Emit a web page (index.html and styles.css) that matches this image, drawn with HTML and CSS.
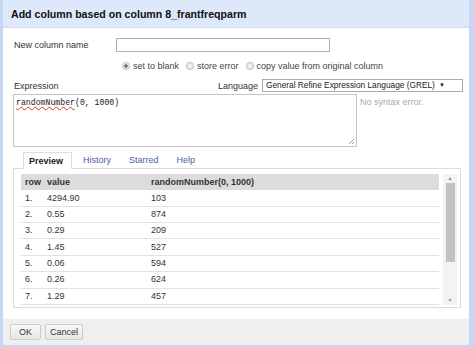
FILE: index.html
```html
<!DOCTYPE html>
<html lang="en">
<head>
    <meta charset="UTF-8">
    <title>Add column</title>
    <link rel="stylesheet" href="styles.css">
</head>
<body>
    <div class="dialog">
        <div class="dialog-header">Add column based on column 8_frantfreqparm</div>
        <div class="dialog-body">
            <div class="name-row">
                <span class="name-label">New column name</span>
                <input type="text" class="name-input">
            </div>
            <div class="radio-row">
                <label><span class="radio checked"></span>set to blank</label>
                <label><span class="radio"></span>store error</label>
                <label><span class="radio"></span>copy value from original column</label>
            </div>
            <div class="expr-row">
                <span>Expression</span>
                <span class="lang">Language
                    <span class="lang-select">General Refine Expression Language (GREL)<span class="caret">&#9660;</span></span>
                </span>
            </div>
            <div class="code-row">
                <div class="code-box"><span class="squiggle">randomNumber</span>(0, 1000)<span class="grip"></span></div>
                <div class="status">No syntax error.</div>
            </div>
            <div class="tabs">
                <span class="tab active">Preview</span>
                <span class="tab">History</span>
                <span class="tab">Starred</span>
                <span class="tab">Help</span>
            </div>
            <div class="panel">
                <div class="grid-wrap">
                    <table class="preview">
                        <tr class="head"><td class="c1">row</td><td class="c2">value</td><td>randomNumber(0, 1000)</td></tr>
                        <tr><td class="c1">1.</td><td class="c2">4294.90</td><td>103</td></tr>
                        <tr><td class="c1">2.</td><td class="c2">0.55</td><td>874</td></tr>
                        <tr><td class="c1">3.</td><td class="c2">0.29</td><td>209</td></tr>
                        <tr><td class="c1">4.</td><td class="c2">1.45</td><td>527</td></tr>
                        <tr><td class="c1">5.</td><td class="c2">0.06</td><td>594</td></tr>
                        <tr><td class="c1">6.</td><td class="c2">0.26</td><td>624</td></tr>
                        <tr><td class="c1">7.</td><td class="c2">1.29</td><td>457</td></tr>
                    </table>
                    <div class="scrollbar">
                        <span class="arrow">&#9650;</span>
                        <span class="track"><span class="thumb"></span></span>
                        <span class="arrow">&#9660;</span>
                    </div>
                </div>
            </div>
        </div>
        <div class="dialog-footer">
            <button class="btn">OK</button>
            <button class="btn">Cancel</button>
        </div>
    </div>
</body>
</html>
```

FILE: styles.css
```css
body {
    margin: 0;
    font-family: 'Liberation Sans', Arial, sans-serif;
    font-size: 9px;
    color: #333;
}
.dialog {
    width: 474px;
    height: 347px;
    box-sizing: border-box;
    display: flex;
    flex-direction: column;
    background-color: white;
    border-left: 3px solid #c6d6f5;
    border-right: 5px solid #c6d6f5;
    border-bottom: 2px solid #c6d6f5;
}
.dialog-header {
    height: 27px;
    line-height: 29px;
    padding-left: 8px;
    background-color: #dde8fa;
    font-size: 10.6px;
    font-weight: bold;
    color: #111;
    border-bottom: 1px solid #d0ddf5;
}
.dialog-body {
    flex: 1;
    padding: 10px 6px 0 10px;
}
.name-row {
    display: flex;
    align-items: center;
    height: 14px;
}
.name-label {
    width: 102px;
    padding-left: 1px;
}
.name-input {
    width: 210px;
    height: 10px;
    padding: 1px;
    border: 1px solid #b0b0b0;
    margin: 0;
}
.radio-row {
    display: flex;
    margin: 8px 0 0 109px;
    height: 12px;
    align-items: center;
    color: #444;
}
.radio-row label {
    display: flex;
    align-items: center;
    margin-right: 7px;
}
.radio {
    width: 8px;
    height: 8px;
    border-radius: 50%;
    border: 1px solid #bbb;
    background-color: #eee;
    margin-right: 3px;
    box-sizing: border-box;
    display: inline-block;
}
.radio.checked {
    background: radial-gradient(circle, #777 0 1.5px, #eee 2px);
}
.expr-row {
    display: flex;
    justify-content: space-between;
    align-items: center;
    margin-top: 7px;
    height: 13px;
    padding-left: 1px;
}
.lang {
    display: flex;
    align-items: center;
    gap: 4px;
}
.lang-select {
    width: 193px;
    height: 11px;
    line-height: 11px;
    padding: 0 3px;
    border: 1px solid #aaa;
    position: relative;
    color: #222;
    font-size: 8.3px;
    white-space: nowrap;
}
.caret {
    position: absolute;
    right: 17px;
    top: 0;
    font-size: 6px;
}
.code-row {
    display: flex;
    margin-top: 2px;
}
.code-box {
    width: 338px;
    height: 45px;
    border: 1px solid #c4c4c4;
    padding: 3px 2px;
    font-family: 'Liberation Mono', monospace;
    font-size: 8.2px;
    color: #222;
    position: relative;
}
.squiggle {
    text-decoration: underline wavy #d33;
    text-decoration-thickness: 1px;
}
.grip {
    position: absolute;
    right: 2px;
    bottom: 2px;
    width: 5px;
    height: 5px;
    background: linear-gradient(135deg, transparent 50%, #999 50%, #999 60%, transparent 60%, transparent 75%, #999 75%, #999 85%, transparent 85%);
}
.status {
    margin: 3px 0 0 3px;
    color: #aaa;
}
.tabs {
    display: flex;
    margin-top: 5px;
    padding-left: 10px;
    height: 17px;
}
.tab {
    padding: 0 13px 0 5px;
    line-height: 17px;
    color: #4a63a6;
}
.tab.active {
    padding: 0 8px 0 5px;
    margin-right: 6px;
    color: #222;
    font-weight: bold;
    border: 1px solid #ddd;
    border-bottom: none;
    background-color: white;
    position: relative;
    z-index: 1;
}
.panel {
    width: 448px;
    height: 140px;
    border: 1px solid #ddd;
    margin-top: -1px;
    box-sizing: border-box;
    padding: 5px 0 0 7px;
}
.grid-wrap {
    display: flex;
    gap: 4px;
}
.preview {
    width: 418px;
    border-collapse: collapse;
}
.preview td {
    height: 15px;
    padding: 0 0 0 4px;
    border-bottom: 1px solid #e2e2e2;
    line-height: 15px;
}
.preview .head td {
    background-color: #dcdcdc;
    font-weight: bold;
    border-bottom: none;
    height: 16px;
}
.preview .c1 {
    width: 18px;
}
.preview .c2 {
    width: 100px;
}
.scrollbar {
    width: 14px;
    height: 131px;
    background-color: #f3f3f3;
    display: flex;
    flex-direction: column;
    align-items: center;
}
.arrow {
    font-size: 5px;
    color: #888;
    height: 9px;
    line-height: 9px;
}
.track {
    flex: 1;
    width: 9px;
}
.thumb {
    display: block;
    height: 79px;
    background-color: #c1c1c1;
}
.dialog-footer {
    height: 26px;
    background-color: #f0eeee;
    display: flex;
    align-items: center;
    gap: 4px;
    padding-left: 7px;
    margin-top: 10px;
}
.btn {
    font-family: 'Liberation Sans', Arial, sans-serif;
    font-size: 9px;
    color: #333;
    height: 16px;
    padding: 0 4px;
    border: 1px solid #ccc;
    border-radius: 2px;
    background: linear-gradient(#fafafa, #e6e6e6);
}
.btn:first-child {
    width: 31px;
}
```
